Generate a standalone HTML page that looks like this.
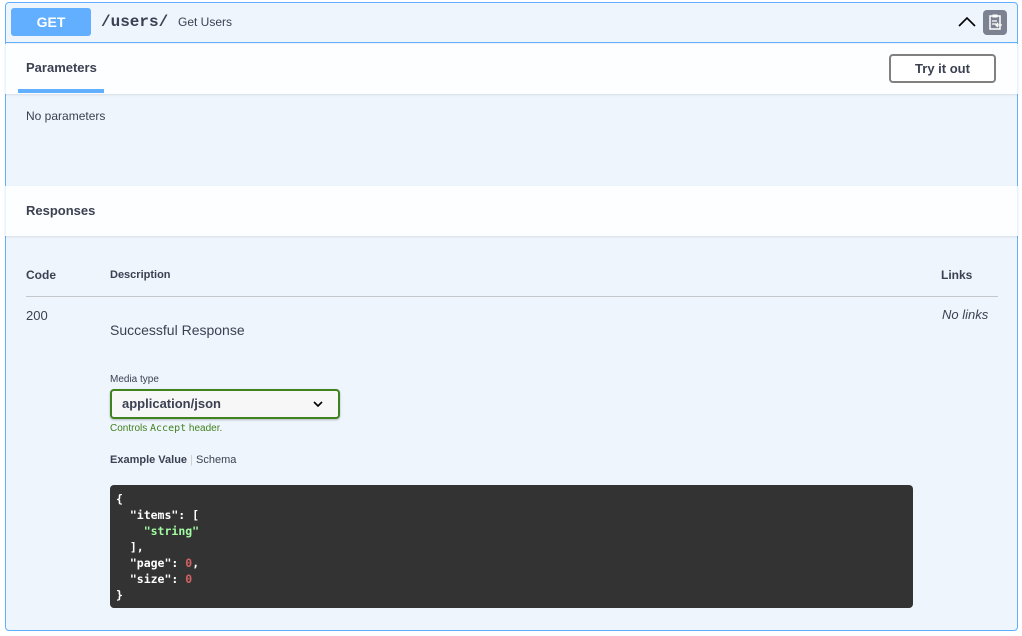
<!DOCTYPE html>
<html><head><style>
*{margin:0;padding:0;box-sizing:border-box}
body{width:1022px;height:636px;background:#fff;font-family:"Liberation Sans",sans-serif;color:#3b4151;position:relative;overflow:hidden}
.op{position:absolute;left:5px;top:2px;width:1013px;height:629px;border:1px solid #61affe;border-radius:4px;background:#eef5fd}
.in{position:absolute;left:-1px;top:-1px;width:1013px;height:629px}
.hdr{position:absolute;left:0;top:0;width:100%;height:41px;border-bottom:1px solid #61affe}
.get{position:absolute;left:6px;top:6px;width:80px;height:28px;background:#61affe;border-radius:3px;color:#fff;font-weight:bold;font-size:14px;text-align:center;line-height:28px}
.path{position:absolute;left:96px;top:11px;font-family:"Liberation Mono",monospace;font-weight:bold;font-size:16px}
.sum{position:absolute;left:173px;top:13px;font-size:12px}
.bar{position:absolute;left:0;width:100%;height:50px;background:rgba(255,255,255,.85);box-shadow:0 1px 2px rgba(0,0,0,.1)}
.b{font-weight:bold;font-size:13px;position:absolute}
.try{position:absolute;left:884px;top:10px;width:107px;height:29px;border:2px solid #808080;border-radius:4px;font-weight:bold;font-size:13px;text-align:center;line-height:25px;background:#fff}
.t{position:absolute;font-size:12px}
pre{position:absolute;left:105px;top:483px;width:803px;height:123px;background:#333;border-radius:4px;color:#fff;font-family:"DejaVu Sans Mono",monospace;font-weight:bold;font-size:11.5px;line-height:16px;padding:6px 6px}
</style></head><body>
<div class="op"><div class="in">
 <div class="hdr">
  <div class="get">GET</div>
  <div class="path">/users/</div>
  <div class="sum">Get Users</div>
  <svg style="position:absolute;left:952px;top:13px" width="20" height="14"><path d="M2 11 L10 3 L18 11" stroke="#000" stroke-width="1.6" fill="none"/></svg>
  <div style="position:absolute;left:978px;top:8px;width:24px;height:25px;background:#7d8293;border-radius:4px"><svg width="24" height="25"><rect x="7" y="6" width="10" height="13" fill="none" stroke="#fff" stroke-width="1.5"/><rect x="9.5" y="4.5" width="5" height="3" fill="#fff"/><path d="M9 11h5M9 14h4M13 15h6M15 13l-2 2 2 2" stroke="#fff" stroke-width="1.3" fill="none"/></svg></div>
 </div>
 <div class="bar" style="top:42px">
  <div class="b" style="left:21px;top:16px">Parameters</div>
  <div style="position:absolute;left:13px;top:45px;width:86px;height:4px;background:#61affe"></div>
  <div class="try">Try it out</div>
 </div>
 <div class="t" style="left:21px;top:107px">No parameters</div>
 <div class="bar" style="top:184px">
  <div class="b" style="left:21px;top:17px">Responses</div>
 </div>
 <div class="b" style="left:21px;top:266px;font-size:12px">Code</div>
 <div class="t" style="left:105px;top:267px;font-size:11px;font-weight:bold">Description</div>
 <div class="b" style="left:936px;top:266px;font-size:12px">Links</div>
 <div style="position:absolute;left:21px;top:294px;width:972px;height:1px;background:#c4c8cd"></div>
 <div class="t" style="left:21px;top:306px;font-size:13px">200</div>
 <div class="t" style="left:105px;top:320px;font-size:14px">Successful Response</div>
 <div class="t" style="left:937px;top:305px;font-style:italic;font-size:13px">No links</div>
 <div class="t" style="left:105px;top:372px;font-size:10px">Media type</div>
 <div style="position:absolute;left:105px;top:387px;width:230px;height:30px;border:2px solid #41821e;border-radius:4px;background:#f7f7f7;box-shadow:0 1px 2px rgba(0,0,0,.25)">
  <span style="position:absolute;left:10px;top:5px;font-weight:bold;font-size:13px">application/json</span>
  <svg style="position:absolute;left:200px;top:8px" width="12" height="10"><path d="M2 3l4 4 4-4" stroke="#000" stroke-width="1.6" fill="none"/></svg>
 </div>
 <div class="t" style="left:105px;top:421px;font-size:10px;color:#41821e">Controls <span style="font-family:'DejaVu Sans Mono',monospace">Accept</span> header.</div>
 <div class="t" style="left:105px;top:452px;font-size:11px;font-weight:bold">Example Value <span style="font-weight:normal;color:#ccc">|</span> <span style="font-weight:normal">Schema</span></div>
<pre>{
  "items": [
    <span style="color:#a2fca2">"string"</span>
  ],
  "page": <span style="color:#d36363">0</span>,
  "size": <span style="color:#d36363">0</span>
}</pre>
</div></div>
</body></html>
